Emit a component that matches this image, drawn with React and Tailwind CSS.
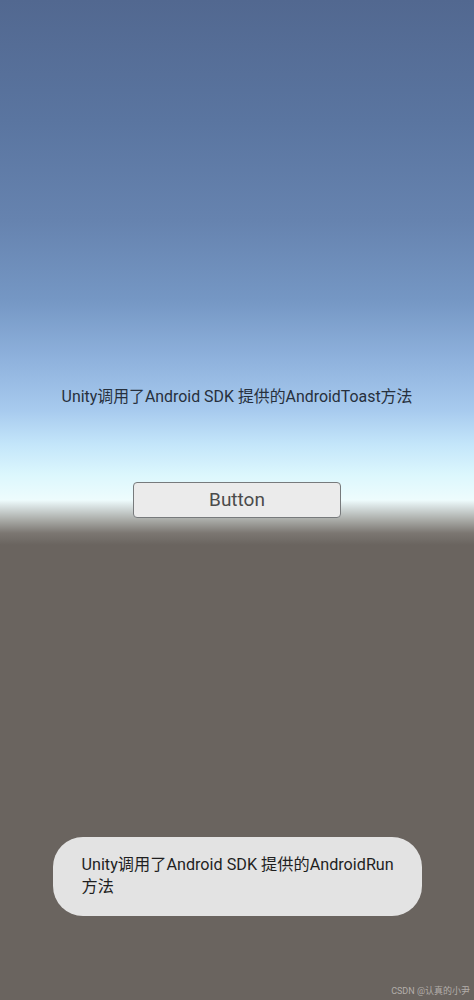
import React from 'react';

const font = { fontFamily: 'Roboto, "Noto Sans CJK SC", sans-serif' };

export default function App() {
  return (
    <div
      className="relative w-[474px] h-[1000px] overflow-hidden flex flex-col items-center bg-[linear-gradient(to_bottom,#526890_0px,#5a75a0_120px,#6683af_220px,#7597c4_300px,#8fb2dd_360px,#a7caee_410px,#c4e6fa_445px,#dcf7fd_475px,#eefcfd_500px,#d6dfdf_507px,#a9aba7_520px,#7c7772_533px,#6a645f_545px,#6a645f_1000px)]"
      style={font}
    >
      {/* scene label */}
      <p className="mt-[386px] text-[15.9px] leading-[22px] text-[#27303d] whitespace-nowrap">
        Unity调用了Android SDK 提供的AndroidToast方法
      </p>

      {/* UI button */}
      <button className="mt-[74px] w-[208px] h-[36px] rounded-[4px] border border-[#777a7c] bg-[#ebebeb] text-[19px] text-[#4b4b4b] flex items-center justify-center">
        Button
      </button>

      {/* android toast */}
      <div className="mt-[319px] w-[369px] h-[79px] rounded-[30px] bg-[#e3e3e3] pl-[29px] pr-[22px] pt-[17px] text-[16.2px] leading-[22px] text-[#1f1f1f]">
        Unity调用了Android SDK 提供的AndroidRun方法
      </div>

      <span className="absolute right-[4px] bottom-[3px] text-[9px] leading-[11px] text-[#b3aeaa]">
        CSDN @认真的小尹
      </span>
    </div>
  );
}
